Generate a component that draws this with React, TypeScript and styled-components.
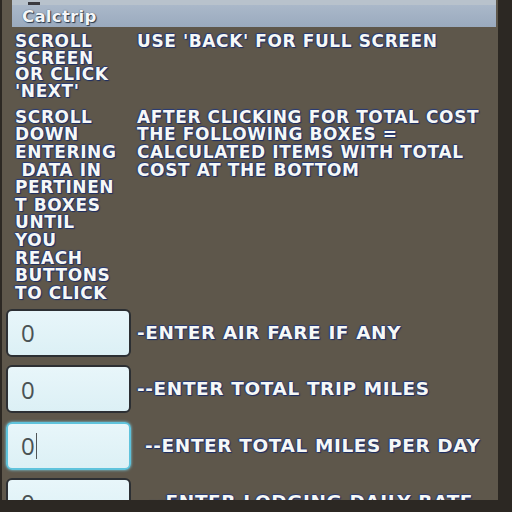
import React from 'react';
import styled, { createGlobalStyle } from 'styled-components';

const GlobalStyle = createGlobalStyle`
  html, body {
    margin: 0;
    padding: 0;
    background: #2f2b26;
  }
  body {
    font-family: "DejaVu Sans", "Open Sans", sans-serif;
  }
`;

const Bezel = styled.div`
  width: 512px;
  height: 512px;
  overflow: hidden;
  background: #2c2823;
`;

const Screen = styled.div`
  margin-left: 2px;
  width: 496px;
  height: 500px;
  background: #5e574b;
  display: flex;
  flex-direction: column;
  overflow: hidden;
`;

const TopStrip = styled.div`
  display: flex;
  flex-direction: column;
  margin-left: 10px;
  margin-right: 2px;
`;

const StatusBar = styled.div`
  height: 5px;
  background: #b8c2cc;
  display: flex;
  align-items: flex-end;
  padding-left: 16px;
`;

const StatusIcon = styled.div`
  width: 12px;
  height: 3px;
  background: #3a3a40;
`;

const TitleBar = styled.div`
  height: 22px;
  background: linear-gradient(180deg, #aab8c9, #9aaabe);
  display: flex;
  align-items: center;
  padding-left: 10px;
  color: #f4f6f8;
  font-weight: 700;
  font-size: 16.5px;
  letter-spacing: 0.3px;
  text-shadow: 0 0 1px #27364a, 1px 1px 1px #27364a;
`;

const Body = styled.div`
  display: flex;
  flex-direction: column;
  padding: 6px 0 0 13px;
`;

const InfoRow = styled.div`
  display: grid;
  grid-template-columns: 122px 1fr;
  margin-bottom: ${p => p.$gap ?? 0}px;
`;

const Caption = styled.div`
  color: #f6f8f6;
  font-weight: 700;
  font-size: 17px;
  line-height: ${p => p.$lh ?? 17.6}px;
  letter-spacing: 0.6px;
  white-space: pre;
  text-shadow: 0 0 1px #1d2d63, 1px 1px 1px #1d2d63, -1px 0 1px #2a3d7a, 0 -1px 1px #2a3d7a;
`;

const FormRow = styled.div`
  display: flex;
  align-items: center;
  height: 56.5px;
  margin-left: -9px;
  flex-shrink: 0;
`;

const Field = styled.div`
  width: 125px;
  height: 48px;
  box-sizing: border-box;
  border-radius: 6px;
  border: 2px solid ${p => (p.$focused ? '#5fc3dc' : '#2c2f33')};
  box-shadow: ${p => (p.$focused ? '0 0 3px #7fd6ee' : 'none')};
  background: linear-gradient(180deg, #e8f6fa, #dcf0f5);
  display: flex;
  align-items: center;
  padding-left: 13px;
  font-family: "Open Sans", sans-serif;
  font-size: 24px;
  color: #4a5254;
  flex-shrink: 0;
`;

const Cursor = styled.span`
  display: inline-block;
  width: 1px;
  height: 26px;
  background: #505658;
  margin-left: 1px;
`;

const FieldLabel = styled(Caption)`
  margin-left: ${p => p.$indent}px;
  font-size: 18.5px;
`;

const fields = [
  { label: '-ENTER AIR FARE IF ANY', indent: 6 },
  { label: '--ENTER TOTAL TRIP MILES', indent: 6 },
  { label: '--ENTER TOTAL MILES PER DAY', indent: 14, focused: true },
  { label: '--ENTER LODGING DAILY RATE', indent: 18 },
];

export default function App() {
  return (
    <>
      <GlobalStyle />
      <Bezel>
        <Screen>
          <TopStrip>
            <StatusBar>
              <StatusIcon />
            </StatusBar>
            <TitleBar>Calctrip</TitleBar>
          </TopStrip>
          <Body>
            <InfoRow $gap={9}>
              <Caption $lh={16.7}>{'SCROLL\nSCREEN\nOR CLICK\n\'NEXT\''}</Caption>
              <Caption $lh={16.7}>{"USE 'BACK' FOR FULL SCREEN"}</Caption>
            </InfoRow>
            <InfoRow $gap={2}>
              <Caption>
                {'SCROLL\nDOWN\nENTERING\n DATA IN\nPERTINEN\nT BOXES\nUNTIL\nYOU\nREACH\nBUTTONS\nTO CLICK'}
              </Caption>
              <Caption>
                {'AFTER CLICKING FOR TOTAL COST\nTHE FOLLOWING BOXES =\nCALCULATED ITEMS WITH TOTAL\nCOST AT THE BOTTOM'}
              </Caption>
            </InfoRow>
            {fields.map(f => (
              <FormRow key={f.label}>
                <Field $focused={f.focused}>
                  0{f.focused && <Cursor />}
                </Field>
                <FieldLabel $indent={f.indent}>{f.label}</FieldLabel>
              </FormRow>
            ))}
          </Body>
        </Screen>
      </Bezel>
    </>
  );
}
